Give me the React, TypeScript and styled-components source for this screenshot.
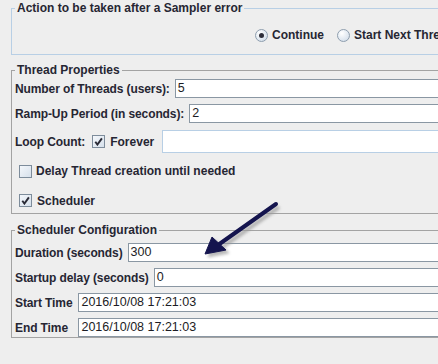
import React from 'react';
import styled, { createGlobalStyle } from 'styled-components';

const GlobalStyle = createGlobalStyle`
  body {
    margin: 0;
    background: #eeeeee;
    font-family: 'Liberation Sans', Arial, sans-serif;
    color: #262633;
  }
`;

const Page = styled.div`
  position: relative;
  width: 438px;
  height: 364px;
  overflow: hidden;
  box-sizing: border-box;
  padding: 1px 0 0 11px;
  background: #eeeeee;
`;

const Group = styled.fieldset<{ $tone?: 'blue' | 'gray'; $gap?: number; $bottom?: number }>`
  width: 560px;
  min-width: 0;
  margin: ${(p) => p.$gap || 0}px 0 0 0;
  padding: 0 0 ${(p) => p.$bottom ?? 3}px 3px;
  box-sizing: border-box;
  border: 1px solid ${(p) => (p.$tone === 'blue' ? '#b8cfe5' : '#a3a3a3')};
  display: flex;
  flex-direction: column;
`;

const Title = styled.legend`
  padding: 0 2px;
  margin: 0;
  font-size: 12px;
  font-weight: bold;
  line-height: 15px;
  color: #262633;
`;

const RadioRow = styled.div`
  display: flex;
  align-items: center;
  height: 16px;
  margin: 11px 0 8px 240px;
  gap: 13px;
`;

const Option = styled.label`
  display: flex;
  align-items: center;
  gap: 4px;
  font-size: 12px;
  font-weight: bold;
  white-space: nowrap;
`;

const RadioDot = styled.span<{ $on?: boolean }>`
  width: 11px;
  height: 11px;
  border-radius: 50%;
  border: 1px solid #8e9eae;
  background: radial-gradient(circle at 35% 30%, #ffffff 0%, #dbe4ee 70%, #c4d2e1 100%);
  display: flex;
  align-items: center;
  justify-content: center;
  &::after {
    content: '';
    display: ${(p) => (p.$on ? 'block' : 'none')};
    width: 5px;
    height: 5px;
    border-radius: 50%;
    background: #2e2e3a;
  }
`;

const Row = styled.div<{ $top?: number; $h?: number; $indent?: number }>`
  display: flex;
  align-items: center;
  gap: 5px;
  height: ${(p) => p.$h || 19}px;
  margin-top: ${(p) => p.$top || 0}px;
  padding-left: ${(p) => p.$indent || 0}px;
`;

const Label = styled.span`
  font-size: 12px;
  font-weight: bold;
  white-space: nowrap;
  letter-spacing: -0.1px;
`;

const Field = styled.div<{ $soft?: boolean }>`
  flex: 1;
  align-self: stretch;
  box-sizing: border-box;
  background: #ffffff;
  border: 1px solid ${(p) => (p.$soft ? '#b8cfe5' : '#8a97a3')};
  border-right: none;
  font-size: 12.5px;
  line-height: 17px;
  padding-left: 2px;
  color: #1c1c24;
`;

const Box = styled.span`
  width: 11px;
  height: 11px;
  flex: none;
  border: 1px solid #7d8c9b;
  background: linear-gradient(135deg, #f4f7fb 0%, #d6e0eb 100%);
  display: flex;
  align-items: center;
  justify-content: center;
`;

const Check = styled.label<{ $gap?: number; $side?: number }>`
  display: flex;
  align-items: center;
  gap: ${(p) => p.$gap || 4}px;
  margin: 0 ${(p) => p.$side || 0}px 0 ${(p) => (p.$side ? 2 : 0)}px;
  font-size: 12px;
  font-weight: bold;
  white-space: nowrap;
`;

const TimeGrid = styled.div`
  display: grid;
  grid-template-columns: auto 1fr;
  grid-auto-rows: 19px;
  column-gap: 6px;
  row-gap: 6px;
  margin-top: 6px;
  align-items: center;
`;

const Arrow = styled.svg`
  position: absolute;
  left: 196px;
  top: 196px;
  pointer-events: none;
`;

const Tick = () => (
  <svg width="9" height="9" viewBox="0 0 9 9">
    <path d="M1.3 4.8 L3.4 7.6 L7.9 1.4" fill="none" stroke="#2a2a35" strokeWidth="1.9" />
  </svg>
);

const CheckBox: React.FC<{ checked?: boolean }> = ({ checked }) => (
  <Box>{checked && <Tick />}</Box>
);

const App: React.FC = () => (
  <>
    <GlobalStyle />
    <Page>
      <Group $tone="blue">
        <Title>Action to be taken after a Sampler error</Title>
        <RadioRow>
          <Option>
            <RadioDot $on />
            Continue
          </Option>
          <Option>
            <RadioDot />
            Start Next Thread Loop
          </Option>
        </RadioRow>
      </Group>

      <Group $gap={8}>
        <Title>Thread Properties</Title>
        <Row $top={1}>
          <Label>Number of Threads (users):</Label>
          <Field>5</Field>
        </Row>
        <Row $top={6}>
          <Label>Ramp-Up Period (in seconds):</Label>
          <Field>2</Field>
        </Row>
        <Row $top={7} $h={23}>
          <Label>Loop Count:</Label>
          <Check $gap={5} $side={3}>
            <CheckBox checked />
            Forever
          </Check>
          <Field $soft />
        </Row>
        <Row $top={8} $h={20} $indent={4}>
          <Check>
            <CheckBox />
            Delay Thread creation until needed
          </Check>
        </Row>
        <Row $top={10} $h={19} $indent={4}>
          <Check $gap={5}>
            <CheckBox checked />
            Scheduler
          </Check>
        </Row>
      </Group>

      <Group $gap={9} $bottom={0}>
        <Title>Scheduler Configuration</Title>
        <Row $top={5}>
          <Label>Duration (seconds)</Label>
          <Field>300</Field>
        </Row>
        <Row $top={6}>
          <Label>Startup delay (seconds)</Label>
          <Field>0</Field>
        </Row>
        <TimeGrid>
          <Label>Start Time</Label>
          <Field>2016/10/08 17:21:03</Field>
          <Label>End Time</Label>
          <Field>2016/10/08 17:21:03</Field>
        </TimeGrid>
      </Group>

      <Arrow width="100" height="80" viewBox="0 0 100 80">
        <defs>
          <filter id="soft" x="-20%" y="-20%" width="140%" height="140%">
            <feGaussianBlur stdDeviation="1.5" />
          </filter>
        </defs>
        <g transform="translate(3 3)" fill="#9a9a9a" stroke="#9a9a9a" filter="url(#soft)" opacity="0.7">
          <line x1="80" y1="8" x2="22" y2="49" strokeWidth="4" />
          <polygon points="9,58 16,41 30,54" />
        </g>
        <g fill="#14144e" stroke="#14144e">
          <line x1="80" y1="8" x2="22" y2="49" strokeWidth="4" strokeLinecap="round" />
          <polygon points="9,58 16,41 30,54" strokeLinejoin="round" />
        </g>
      </Arrow>
    </Page>
  </>
);

export default App;
